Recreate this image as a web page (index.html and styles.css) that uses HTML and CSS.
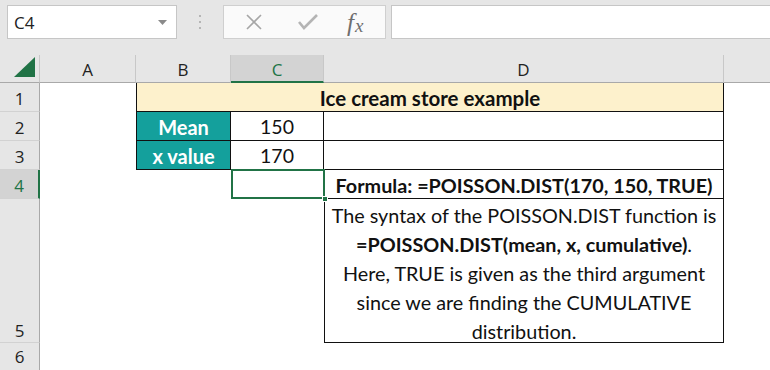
FILE: index.html
```html
<!DOCTYPE html>
<html>
<head>
<meta charset="utf-8">
<link rel="stylesheet" href="styles.css">
</head>
<body>
<div class="toolbar">
  <div class="namebox">
    <span class="name">C4</span>
    <svg class="drop" width="9" height="5" viewBox="0 0 9 5"><path d="M0 0h9L4.5 5z" fill="#8a8a8a"/></svg>
  </div>
  <div class="grip"><i></i><i></i><i></i></div>
  <div class="fbuttons">
    <svg class="ic" width="18" height="16" viewBox="0 0 18 16"><path d="M2 1l14 14M16 1L2 15" stroke="#a6a6a6" stroke-width="1.6" fill="none"/></svg>
    <svg class="ic" width="22" height="16" viewBox="0 0 22 16"><path d="M2 8l5 6L20 1" stroke="#b4b4b4" stroke-width="2.6" fill="none"/></svg>
    <span class="fx">f<span class="x">x</span></span>
  </div>
  <div class="finput"></div>
</div>
<div class="sheet">
  <div class="corner"><svg width="21" height="20" viewBox="0 0 21 20"><path d="M21 0V20H0z" fill="#217346"/></svg></div>
  <div class="colh">A</div>
  <div class="colh">B</div>
  <div class="colh sel">C</div>
  <div class="colh">D</div>
  <div class="colh last"></div>

  <div class="rowh r1">1</div>
  <div class="rowh r2">2</div>
  <div class="rowh r3">3</div>
  <div class="rowh r4 sel">4</div>
  <div class="rowh r5">5</div>
  <div class="rowh r6">6</div>

  <div class="title">Ice cream store example</div>

  <div class="lbl r2">Mean</div>
  <div class="val r2">150</div>
  <div class="dcell r2"></div>

  <div class="lbl r3">x value</div>
  <div class="val r3">170</div>
  <div class="dcell r3"></div>

  <div class="active r4"><span class="handle"></span></div>
  <div class="dcell dleft r4 formula">Formula: =POISSON.DIST(170, 150, TRUE)</div>

  <div class="dcell dleft r5 note">
    <span class="line">The syntax of the POISSON.DIST function is</span>
    <span class="line"><b>=POISSON.DIST(mean, x, cumulative)</b>.</span>
    <span class="line">Here, TRUE is given as the third argument</span>
    <span class="line">since we are finding the CUMULATIVE</span>
    <span class="line">distribution.</span>
  </div>
</div>
</body>
</html>
```
FILE: styles.css
```css
* { box-sizing: border-box; }
html, body { margin: 0; padding: 0; background: #ffffff; }
body { width: 770px; height: 370px; overflow: hidden; font-family: "Lato", "Liberation Sans", sans-serif; color: #111; }

.toolbar {
  height: 55px;
  background: #e6e6e6;
  display: flex;
  align-items: flex-start;
  padding: 5px 0 0 7px;
}
.namebox {
  width: 170px; height: 34px;
  background: #fff;
  border: 1px solid #c6c6c6;
  display: flex; align-items: center; justify-content: space-between;
  padding: 0 9px 0 6px;
  font-family: "Open Sans", "Noto Sans", sans-serif;
  font-size: 17px;
  color: #222;
}
.grip {
  width: 46px; height: 34px;
  display: flex; flex-direction: column; align-items: center; justify-content: center; gap: 4px;
}
.grip i { display: block; width: 2px; height: 2px; background: #b5b5b5; }
.fbuttons {
  width: 163px; height: 34px;
  background: #fafafa;
  border: 1px solid #cfcfcf;
  display: flex; align-items: center;
  padding: 0 0 0 21px;
}
.fbuttons .ic:first-child { margin-right: 34px; }
.fbuttons .ic:nth-child(2) { margin-right: 28px; }
.fx {
  font-family: "Liberation Serif", serif;
  font-style: italic;
  font-size: 25px;
  color: #6e6e6e;
  line-height: 1;
  display: flex; align-items: baseline;
}
.fx .x { font-size: 19px; margin-left: 1px; position: relative; top: 1px; }
.finput {
  margin-left: 5px;
  flex: 1; height: 34px;
  background: #fff;
  border: 1px solid #c6c6c6;
  border-right: none;
}

.sheet {
  display: grid;
  grid-template-columns: 40px 96px 95px 93px 400px 1fr;
  grid-template-rows: 28px 29px 29px 29px 29px 144px 1fr;
  height: 315px;
}
.corner {
  grid-column: 1; grid-row: 1;
  background: #e6e6e6;
  border-right: 1px solid #c8c8c8;
  border-bottom: 1px solid #a9a9a9;
  display: flex; align-items: flex-end; justify-content: flex-end;
  padding: 0 4px 5px 0;
}
.colh {
  grid-row: 1;
  background: #e6e6e6;
  border-right: 1px solid #c8c8c8;
  border-bottom: 1px solid #a9a9a9;
  font-family: "Open Sans", "Noto Sans", sans-serif;
  font-size: 17px;
  color: #222;
  display: flex; align-items: center; justify-content: center;
  padding-top: 2px;
}
.colh.sel { background: #d3d3d3; color: #217346; border-bottom: 2px solid #217346; }
.colh.last { border-right: none; }

.rowh {
  grid-column: 1;
  background: #e6e6e6;
  border-right: 1px solid #a9a9a9;
  border-bottom: 1px solid #d2d2d2;
  font-family: "Open Sans", "Noto Sans", sans-serif;
  font-size: 17px;
  color: #222;
  display: flex; align-items: center; justify-content: center;
  padding-top: 2px;
}
.rowh.sel { background: #d3d3d3; color: #217346; border-right: 2px solid #217346; }
.rowh.r5 { align-items: flex-end; padding-bottom: 0; }
.rowh.r6 { align-items: flex-start; padding-top: 2px; border-bottom: none; }

.r1 { grid-row: 2; }
.r2 { grid-row: 3; }
.r3 { grid-row: 4; }
.r4 { grid-row: 5; }
.r5 { grid-row: 6; }
.r6 { grid-row: 7; }

.title {
  grid-row: 2; grid-column: 3 / 6;
  background: #fdf1cc;
  border-left: 1px solid #111;
  border-right: 1px solid #111;
  border-bottom: 1px solid #111;
  font-weight: 700; font-size: 20.5px;
  display: flex; align-items: center; justify-content: center;
  padding-top: 1px;
}
.lbl {
  grid-column: 3;
  background: #14a09c;
  color: #fff;
  font-weight: 700; font-size: 20px;
  border-left: 1px solid #111;
  border-right: 1px solid #111;
  border-bottom: 1px solid #111;
  display: flex; align-items: center; justify-content: center;
  padding-top: 1px;
}
.val {
  grid-column: 4;
  font-size: 19.5px;
  border-right: 1px solid #111;
  border-bottom: 1px solid #111;
  display: flex; align-items: center; justify-content: center;
  padding-top: 1px;
}
.dcell {
  grid-column: 5;
  border-right: 1px solid #111;
  border-bottom: 1px solid #111;
  font-size: 19.8px;
}
.dleft { border-left: 1px solid #111; }
.formula {
  font-weight: 700;
  display: flex; align-items: center; justify-content: center;
  padding-top: 1px;
}
.note {
  display: flex; flex-direction: column; align-items: center;
  padding-top: 2px;
}
.note .line { line-height: 29px; white-space: nowrap; }

.active {
  grid-column: 4;
  position: relative;
}
.active::after {
  content: "";
  position: absolute;
  left: 0; top: -1px; right: -1px; bottom: 0;
  border: 2px solid #217346;
}
.handle {
  position: absolute;
  right: -4px; bottom: -3px;
  width: 6px; height: 6px;
  background: #217346;
  border: 1px solid #fff;
  z-index: 2;
}
```
